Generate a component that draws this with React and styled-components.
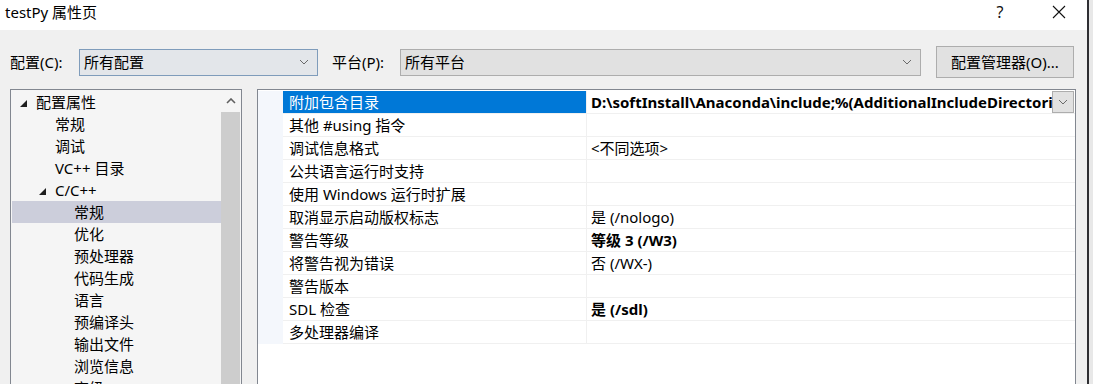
import styled, { createGlobalStyle } from 'styled-components';

const GlobalStyle = createGlobalStyle`
  html, body {
    margin: 0;
    padding: 0;
  }
  body {
    background: #e8e8e8;
    font-family: "Noto Sans", "Noto Sans CJK SC", sans-serif;
    font-size: 15px;
    color: #000;
    overflow: hidden;
  }
  * { box-sizing: border-box; }
`

const Window = styled.div`
    width: 1089px;
    height: 384px;
    display: flex;
    flex-direction: column;
    background: #f0f0f0;
    border-right: 2px solid #2f2f33;
    overflow: hidden;
`

const TitleBar = styled.div`
    height: 30px;
    flex: none;
    display: flex;
    align-items: center;
    background: #ffffff;
    padding-left: 5px;
`

const TitleText = styled.div`
    flex: 1;
    line-height: 20px;
    margin-top: -6px;
`

const TitleButton = styled.div`
    width: 46px;
    height: 30px;
    display: flex;
    align-items: center;
    justify-content: center;
    margin-right: ${p => p.$right || 0}px;
    margin-top: -6px;
    color: #111;
    font-size: 16px;
`

const Toolbar = styled.div`
    flex: none;
    display: flex;
    align-items: center;
    padding: 16px 0 11px 10px;
`

const Label = styled.div`
    width: ${p => p.$width}px;
    margin-left: ${p => p.$left || 0}px;
    line-height: 20px;
`

const Combo = styled.div`
    width: ${p => p.$width}px;
    height: 27px;
    display: flex;
    align-items: center;
    justify-content: space-between;
    padding: 0 8px 0 4px;
    border: 1px solid ${p => (p.$focused ? '#7f9cbb' : '#adadad')};
    background: ${p => (p.$focused ? '#e3e6ea' : '#e1e1e1')};
    line-height: 20px;
`

const Button = styled.div`
    width: 138px;
    height: 32px;
    margin-left: 15px;
    display: flex;
    align-items: center;
    justify-content: center;
    border: 1px solid #adadad;
    background: #e1e1e1;
    line-height: 20px;
`

const Main = styled.div`
    flex: 1;
    min-height: 0;
    display: flex;
    gap: 15px;
    padding-left: 10px;
`

const TreePanel = styled.div`
    width: 232px;
    display: flex;
    border: 1px solid #828790;
    border-bottom: none;
    background: #f5f5f5;
`

const TreeList = styled.div`
    flex: 1;
    padding: 1px 0 0 1px;
`

const TreeRow = styled.div`
    height: 22px;
    display: flex;
    align-items: center;
    padding-left: ${p => 8 + p.$level * 19}px;
    background: ${p => (p.$selected ? '#cccedb' : 'transparent')};
    line-height: 20px;
    white-space: nowrap;
`

const Expander = styled.span`
    width: 16px;
    flex: none;
    display: flex;
    align-items: center;
    padding-top: 2px;

    &::before {
        content: '';
        display: ${p => (p.$open ? 'block' : 'none')};
        width: 0;
        height: 0;
        border-left: 7px solid transparent;
        border-bottom: 7px solid #1e1e1e;
    }
`

const ScrollBar = styled.div`
    width: 19px;
    margin-right: 1px;
    display: flex;
    flex-direction: column;
    background: #f0f0f0;
`

const ScrollArrow = styled.div`
    height: 22px;
    display: flex;
    align-items: center;
    justify-content: center;
    background: #f5f5f5;
`

const ScrollThumb = styled.div`
    flex: 1;
    background: #cdcdcd;
`

const GridPanel = styled.div`
    width: 819px;
    border: 1px solid #828790;
    border-bottom: none;
    background: #ffffff;
    padding-top: 1px;
`

const GridRow = styled.div`
    display: grid;
    grid-template-columns: 25px 304px 1fr;
    height: 23px;
`

const Gutter = styled.div`
    background: #f4f7fc;
`

const NameCell = styled.div`
    display: flex;
    align-items: center;
    padding-left: 6px;
    border-bottom: 1px solid #f0f0f0;
    border-right: 1px solid #f0f0f0;
    background: ${p => (p.$active ? '#0078d7' : 'transparent')};
    color: ${p => (p.$active ? '#ffffff' : '#000')};
    line-height: 20px;
    white-space: nowrap;
`

const ValueCell = styled.div`
    display: flex;
    align-items: center;
    padding-left: 4px;
    border-bottom: 1px solid #f0f0f0;
    min-width: 0;
`

const ValueText = styled.span`
    flex: 1;
    min-width: 0;
    overflow: hidden;
    white-space: nowrap;
    line-height: 20px;
    font-weight: ${p => (p.$bold ? 700 : 400)};
`

const DropButton = styled.div`
    width: 22px;
    height: 22px;
    flex: none;
    margin-right: 1px;
    display: flex;
    align-items: center;
    justify-content: center;
    border: 1px solid #adadad;
    background: #e1e1e1;
`

const Chevron = ({ up }) => (
  <svg width="10" height="6" viewBox="0 0 10 6">
    <polyline
      points={up ? '1,5 5,1 9,5' : '1,1 5,5 9,1'}
      fill="none"
      stroke={up ? '#606060' : '#6a6a6a'}
      strokeWidth={up ? 1.6 : 1}
    />
  </svg>
)

const treeItems = [
  { label: '配置属性', level: 0, open: true },
  { label: '常规', level: 1 },
  { label: '调试', level: 1 },
  { label: 'VC++ 目录', level: 1 },
  { label: 'C/C++', level: 1, open: true },
  { label: '常规', level: 2, selected: true },
  { label: '优化', level: 2 },
  { label: '预处理器', level: 2 },
  { label: '代码生成', level: 2 },
  { label: '语言', level: 2 },
  { label: '预编译头', level: 2 },
  { label: '输出文件', level: 2 },
  { label: '浏览信息', level: 2 },
  { label: '高级', level: 2 },
]

const props = [
  { name: '附加包含目录', value: 'D:\\softInstall\\Anaconda\\include;%(AdditionalIncludeDirectories)', bold: true, active: true },
  { name: '其他 #using 指令', value: '' },
  { name: '调试信息格式', value: '<不同选项>' },
  { name: '公共语言运行时支持', value: '' },
  { name: '使用 Windows 运行时扩展', value: '' },
  { name: '取消显示启动版权标志', value: '是 (/nologo)' },
  { name: '警告等级', value: '等级 3 (/W3)', bold: true },
  { name: '将警告视为错误', value: '否 (/WX-)' },
  { name: '警告版本', value: '' },
  { name: 'SDL 检查', value: '是 (/sdl)', bold: true },
  { name: '多处理器编译', value: '' },
]

function App() {
  return (
    <>
      <GlobalStyle />
      <Window>
        <TitleBar>
          <TitleText>testPy 属性页</TitleText>
          <TitleButton>?</TitleButton>
          <TitleButton $right={5} style={{ marginLeft: 13 }}>
            <svg width="14" height="14" viewBox="0 0 14 14">
              <path d="M1 1 L13 13 M13 1 L1 13" stroke="#111" strokeWidth="1.1" fill="none" />
            </svg>
          </TitleButton>
        </TitleBar>

        <Toolbar>
          <Label $width={69}>配置(C):</Label>
          <Combo $width={239} $focused>
            <span>所有配置</span>
            <Chevron />
          </Combo>
          <Label $width={68} $left={14}>平台(P):</Label>
          <Combo $width={521}>
            <span>所有平台</span>
            <Chevron />
          </Combo>
          <Button>配置管理器(O)...</Button>
        </Toolbar>

        <Main>
          <TreePanel>
            <TreeList>
              {treeItems.map((item, i) => (
                <TreeRow key={i} $level={item.level} $selected={item.selected}>
                  <Expander $open={item.open} />
                  {item.label}
                </TreeRow>
              ))}
            </TreeList>
            <ScrollBar>
              <ScrollArrow>
                <Chevron up />
              </ScrollArrow>
              <ScrollThumb />
            </ScrollBar>
          </TreePanel>

          <GridPanel>
            {props.map((p, i) => (
              <GridRow key={i}>
                <Gutter />
                <NameCell $active={p.active}>{p.name}</NameCell>
                <ValueCell>
                  <ValueText $bold={p.bold}>{p.value}</ValueText>
                  {p.active && (
                    <DropButton>
                      <Chevron />
                    </DropButton>
                  )}
                </ValueCell>
              </GridRow>
            ))}
          </GridPanel>
        </Main>
      </Window>
    </>
  )
}

export default App
